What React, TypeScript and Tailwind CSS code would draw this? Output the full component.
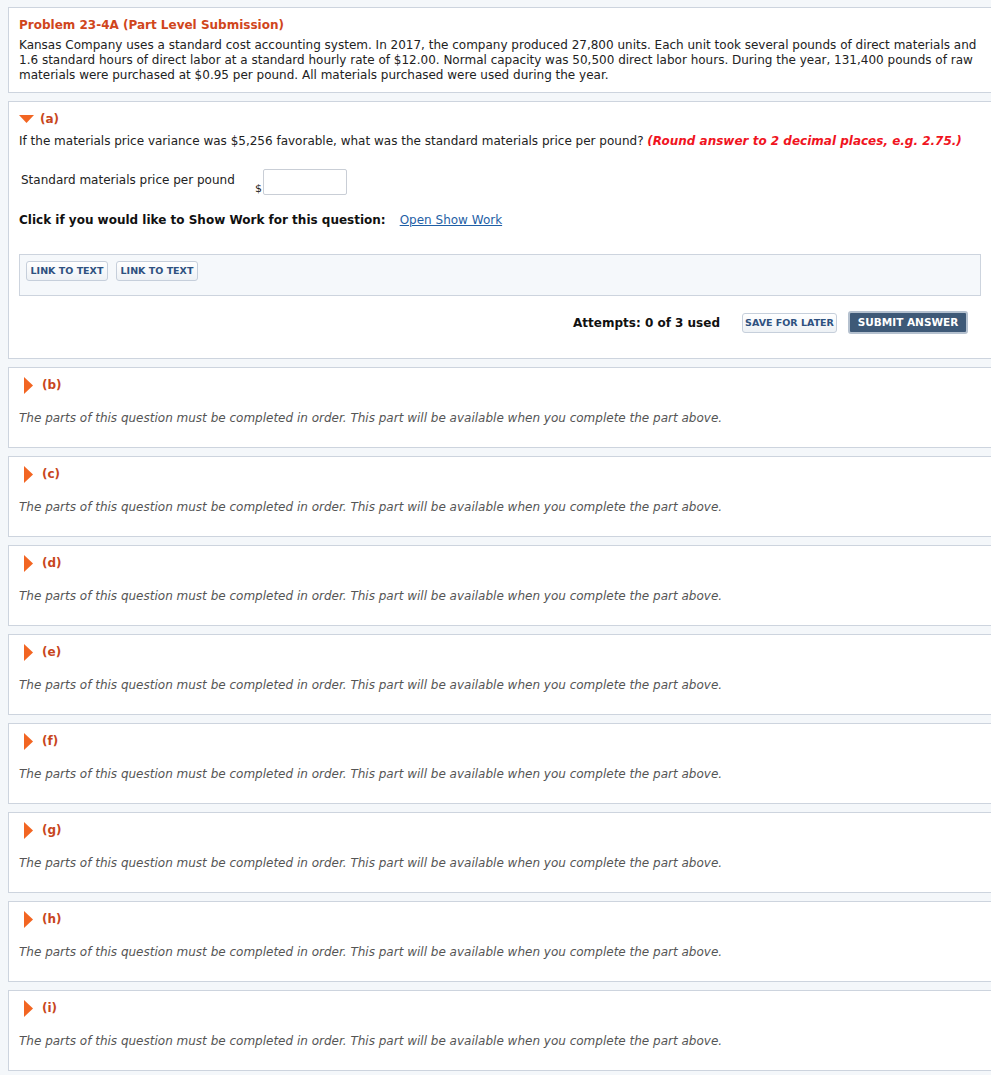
import React from "react";

// ─── Constants ────────────────────────────────────────────────────────────────

const LOCKED_PARTS = ["b", "c", "d", "e", "f", "g", "h", "i"] as const;

const LOCKED_MESSAGE =
  "The parts of this question must be completed in order. This part will be available when you complete the part above.";

// ─── Bits ─────────────────────────────────────────────────────────────────────

function TriangleDown() {
  return (
    <svg width="15" height="9" viewBox="0 0 15 9" className="mr-[6px] shrink-0">
      <polygon points="0,0 15,0 7.5,8" fill="#f26522" />
    </svg>
  );
}

function TriangleRight() {
  return (
    <svg width="9" height="17" viewBox="0 0 9 17" className="ml-[5px] mr-[9px] shrink-0">
      <polygon points="0,0 9,8.5 0,17" fill="#f26522" />
    </svg>
  );
}

function LinkButton({ children }: { children: React.ReactNode }) {
  return (
    <button className="h-[20px] w-[82px] rounded-[3px] border border-[#c6cfdb] bg-gradient-to-b from-white to-[#edf1f5] text-[9.5px] font-bold leading-none text-[#2e5180]">
      {children}
    </button>
  );
}

// ─── Panels ───────────────────────────────────────────────────────────────────

function ProblemPanel() {
  return (
    <section className="border border-r-0 border-[#cdd4de] bg-white px-[10px] pt-[10px] pb-[9px]">
      <h1 className="text-[12px] font-bold leading-[15px] text-[#d0461c]">
        Problem 23-4A (Part Level Submission)
      </h1>
      <p className="mt-[5px] leading-[15px]">
        Kansas Company uses a standard cost accounting system. In 2017, the company produced 27,800 units. Each unit took several pounds of direct materials and 1.6 standard hours of direct labor at a standard hourly rate of $12.00. Normal capacity was 50,500 direct labor hours. During the year, 131,400 pounds of raw materials were purchased at $0.95 per pound. All materials purchased were used during the year.
      </p>
    </section>
  );
}

function ActivePart() {
  return (
    <section className="border border-r-0 border-[#cdd4de] bg-white px-[10px] pt-[10px] pb-[24px]">
      <div className="flex h-[15px] items-center">
        <TriangleDown />
        <span className="font-bold leading-[15px] text-[#c8461d]">(a)</span>
      </div>
      <p className="mt-[7px] leading-[15px]">
        If the materials price variance was $5,256 favorable, what was the standard materials price per pound?{" "}
        <span className="font-bold italic text-[#f0141e]">
          (Round answer to 2 decimal places, e.g. 2.75.)
        </span>
      </p>

      <div className="mt-[20px] flex items-start pl-[2px]">
        <span className="mt-[4px] w-[234px] leading-[15px]">Standard materials price per pound</span>
        <span className="mt-[12px] text-[11px] leading-[15px]">$</span>
        <input
          type="text"
          className="ml-[1px] h-[26px] w-[84px] rounded-[2px] border border-[#c9ced6] bg-white outline-none"
        />
      </div>

      <div className="mt-[17px] flex items-center leading-[15px]">
        <span className="font-bold text-[#111]">Click if you would like to Show Work for this question:</span>
        <a href="#" className="ml-[14px] text-[#1f5fa6] underline">
          Open Show Work
        </a>
      </div>

      <div className="mt-[26px] flex h-[42px] items-start gap-[8px] border border-[#cdd4de] bg-[#f5f8fb] pl-[6px] pt-[6px]">
        <LinkButton>LINK TO TEXT</LinkButton>
        <LinkButton>LINK TO TEXT</LinkButton>
      </div>

      <div className="mt-[15px] flex items-center justify-end pr-[13px]">
        <span className="text-[12px] font-bold text-[#111]">Attempts: 0 of 3 used</span>
        <button className="ml-[22px] h-[20px] w-[95px] rounded-[3px] border border-[#c6cfdb] bg-gradient-to-b from-white to-[#edf1f5] text-[9.5px] font-bold leading-none text-[#2e5180]">
          SAVE FOR LATER
        </button>
        <button className="ml-[11px] h-[23px] w-[120px] rounded-[3px] border-2 border-[#b5c1cf] bg-[#3e5977] text-[10.5px] font-bold leading-none text-white">
          SUBMIT ANSWER
        </button>
      </div>
    </section>
  );
}

function LockedPart({ letter }: { letter: string }) {
  return (
    <section className="h-[81px] border border-r-0 border-[#cdd4de] bg-white px-[10px] pt-[9px]">
      <div className="flex h-[17px] items-center">
        <TriangleRight />
        <span className="font-bold leading-[15px] text-[#c8461d]">({letter})</span>
      </div>
      <p className="mt-[17px] italic leading-[15px] text-[#555]">{LOCKED_MESSAGE}</p>
    </section>
  );
}

// ─── Export ───────────────────────────────────────────────────────────────────

export default function App() {
  return (
    <div className="min-h-screen overflow-hidden bg-[#f4f7fa] pl-[8px] pt-[7px] pb-[6px] font-['DejaVu_Sans',Verdana,sans-serif] text-[12px] text-[#222]">
      <div className="flex flex-col gap-[8px]">
        <ProblemPanel />
        <ActivePart />
        {LOCKED_PARTS.map((p) => (
          <LockedPart key={p} letter={p} />
        ))}
      </div>
    </div>
  );
}
